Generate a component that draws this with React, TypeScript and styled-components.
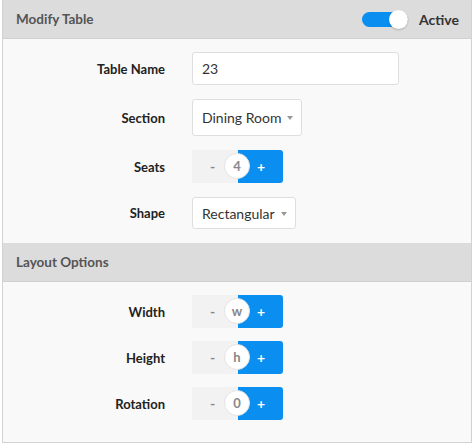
import React, { useState } from "react";
import styled, { createGlobalStyle } from "styled-components";

const GlobalStyle = createGlobalStyle`
  html, body {
    margin: 0;
    padding: 0;
    background: #ffffff;
    font-family: "Lato", "Open Sans", sans-serif;
  }
`;

interface StepperProps {
  value: string;
}

function Stepper({ value }: StepperProps) {
  return (
    <StepperBox>
      <MinusButton>-</MinusButton>
      <PlusButton>+</PlusButton>
      <ValueBubble>{value}</ValueBubble>
    </StepperBox>
  );
}

interface SelectProps {
  value: string;
  height: number;
}

function Select({ value, height }: SelectProps) {
  return (
    <SelectBox $height={height}>
      <span>{value}</span>
      <Caret />
    </SelectBox>
  );
}

export default function App() {
  const [active, setActive] = useState(true);

  return (
    <>
      <GlobalStyle />
      <Panel>
        <SectionHeader>
          <HeaderTitle>Modify Table</HeaderTitle>
          <ToggleWrap onClick={() => setActive(!active)}>
            <Track $on={active}>
              <Knob $on={active} />
            </Track>
            <ToggleLabel>Active</ToggleLabel>
          </ToggleWrap>
        </SectionHeader>
        <Body $gap={14} $bottom={14}>
          <FormRow>
            <Label>Table Name</Label>
            <TextInput defaultValue="23" />
          </FormRow>
          <FormRow>
            <Label>Section</Label>
            <Select value="Dining Room" height={37} />
          </FormRow>
          <FormRow>
            <Label>Seats</Label>
            <Stepper value="4" />
          </FormRow>
          <FormRow>
            <Label>Shape</Label>
            <Select value="Rectangular" height={32} />
          </FormRow>
        </Body>
        <SectionHeader>
          <HeaderTitle>Layout Options</HeaderTitle>
        </SectionHeader>
        <Body $gap={13} $bottom={22}>
          <FormRow>
            <Label>Width</Label>
            <Stepper value="w" />
          </FormRow>
          <FormRow>
            <Label>Height</Label>
            <Stepper value="h" />
          </FormRow>
          <FormRow>
            <Label>Rotation</Label>
            <Stepper value="0" />
          </FormRow>
        </Body>
      </Panel>
    </>
  );
}

const Panel = styled.div`
  margin: 0 2px;
  border: 1px solid #d2d2d2;
  border-top: none;
  background: #f9f9f9;
`;

const SectionHeader = styled.div`
  height: 39px;
  box-sizing: border-box;
  display: flex;
  align-items: center;
  justify-content: space-between;
  padding: 0 12px 0 13px;
  background: #dcdcdc;
  border-bottom: 1px solid #d0d0d0;
`;

const HeaderTitle = styled.div`
  font-weight: 700;
  font-size: 13.5px;
  color: #555555;
`;

const ToggleWrap = styled.div`
  display: flex;
  align-items: center;
  gap: 11px;
  cursor: pointer;
`;

const Track = styled.div<{ $on: boolean }>`
  position: relative;
  width: 46px;
  height: 15px;
  border-radius: 8px;
  background: ${(p) => (p.$on ? "#0a8ef0" : "#b5b5b5")};
`;

const Knob = styled.div<{ $on: boolean }>`
  position: absolute;
  top: -2px;
  left: ${(p) => (p.$on ? "27px" : "0")};
  width: 19px;
  height: 19px;
  border-radius: 50%;
  background: #ffffff;
  box-shadow: 0 1px 2px rgba(0, 0, 0, 0.2);
`;

const ToggleLabel = styled.div`
  font-weight: 700;
  font-size: 14px;
  color: #333333;
`;

const Body = styled.div<{ $gap: number; $bottom: number }>`
  display: flex;
  flex-direction: column;
  gap: ${(p) => p.$gap}px;
  padding: 13px 0 ${(p) => p.$bottom}px;
`;

const FormRow = styled.div`
  display: grid;
  grid-template-columns: 162px 1fr;
  column-gap: 27px;
  align-items: center;
`;

const Label = styled.div`
  text-align: right;
  font-weight: 700;
  font-size: 13px;
  color: #222222;
`;

const TextInput = styled.input`
  width: 207px;
  height: 33px;
  box-sizing: border-box;
  border: 1px solid #dedede;
  border-radius: 3px;
  background: #ffffff;
  padding: 0 9px;
  font-family: "Lato", "Open Sans", sans-serif;
  font-size: 14px;
  color: #333333;
  outline: none;
`;

const SelectBox = styled.div<{ $height: number }>`
  display: inline-flex;
  align-items: center;
  gap: 6px;
  justify-self: start;
  height: ${(p) => p.$height}px;
  box-sizing: border-box;
  padding: 0 8px 0 9px;
  border: 1px solid #dedede;
  border-radius: 3px;
  background: #ffffff;
  font-size: 14px;
  color: #333333;
`;

const Caret = styled.span`
  width: 0;
  height: 0;
  border-left: 3.5px solid transparent;
  border-right: 3.5px solid transparent;
  border-top: 4px solid #999999;
  margin-top: 1px;
`;

const StepperBox = styled.div`
  position: relative;
  display: flex;
  justify-self: start;
  width: 91px;
  height: 33px;
`;

const MinusButton = styled.div`
  width: 46px;
  display: flex;
  align-items: center;
  justify-content: flex-start;
  padding-left: 18px;
  box-sizing: border-box;
  background: #f2f2f2;
  color: #888888;
  font-weight: 700;
  font-size: 14px;
`;

const PlusButton = styled.div`
  width: 45px;
  display: flex;
  align-items: center;
  justify-content: flex-end;
  padding-right: 18px;
  box-sizing: border-box;
  background: #0a8ef0;
  border-radius: 0 3px 3px 0;
  color: #ffffff;
  font-weight: 700;
  font-size: 14px;
`;

const ValueBubble = styled.div`
  position: absolute;
  top: 3px;
  left: 32px;
  width: 26px;
  height: 26px;
  box-sizing: border-box;
  border-radius: 50%;
  border: 1px solid #e4e4e4;
  background: #ffffff;
  display: flex;
  align-items: center;
  justify-content: center;
  color: #888888;
  font-weight: 700;
  font-size: 13px;
`;
